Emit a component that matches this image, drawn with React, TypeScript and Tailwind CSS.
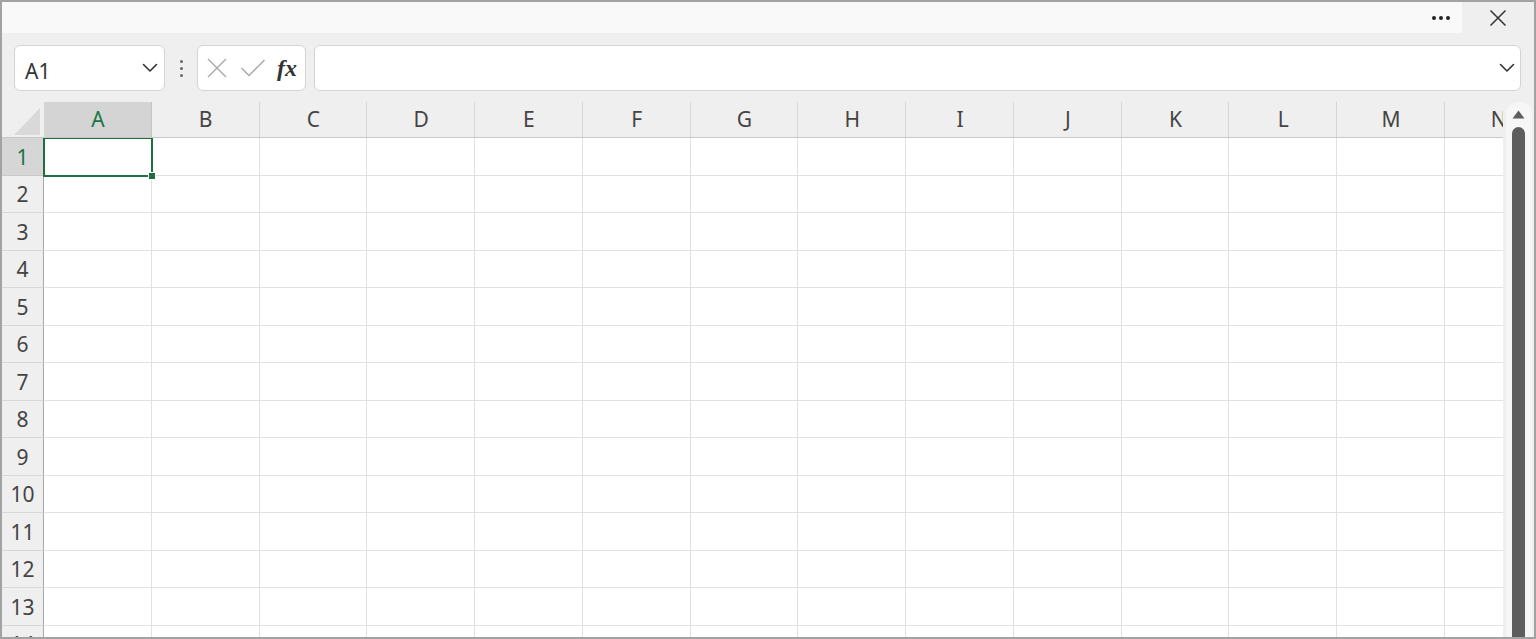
import React from "react";

const COLS = ["A", "B", "C", "D", "E", "F", "G", "H", "I", "J", "K", "L", "M", "N"];
const ROWS = Array.from({ length: 14 }, (_, i) => i + 1);

function Chevron({ className }: { className?: string }) {
  return (
    <svg className={className} width="16" height="10" viewBox="0 0 16 10" fill="none">
      <path d="M1.5 1.5 L8 8 L14.5 1.5" stroke="#333" strokeWidth="1.6" strokeLinecap="round" strokeLinejoin="round" />
    </svg>
  );
}

export default function App() {
  return (
    <div
      className="w-[1536px] h-[639px] overflow-hidden bg-[#efefef] border-2 border-[#a2a2a2] flex flex-col text-[#444]"
      style={{ fontFamily: '"Noto Sans", "Open Sans", sans-serif' }}
    >
      {/* Title strip */}
      <div className="h-[31px] flex shrink-0">
        <div className="flex-1 bg-[#f9f9f9] flex items-center justify-end pr-[12px]">
          <div className="flex gap-[3px] items-center">
            <span className="w-[4px] h-[4px] rounded-full bg-[#222]" />
            <span className="w-[4px] h-[4px] rounded-full bg-[#222]" />
            <span className="w-[4px] h-[4px] rounded-full bg-[#222]" />
          </div>
        </div>
        <div className="w-[72px] flex items-center justify-center">
          <svg width="18" height="18" viewBox="0 0 18 18">
            <path d="M1.5 1.5 L16.5 16.5 M16.5 1.5 L1.5 16.5" stroke="#333" strokeWidth="1.5" />
          </svg>
        </div>
      </div>

      {/* Toolbar */}
      <div className="h-[69px] shrink-0 flex items-start pt-[12px] pl-[12px] pr-[13px]">
        <div className="w-[151px] h-[46px] bg-white rounded-[6px] border border-[#d4d4d4] flex items-center justify-between pl-[10px] pr-[6px]">
          <span className="text-[21px] text-[#333] leading-none mt-[6px]">A1</span>
          <Chevron />
        </div>
        <div className="w-[32px] h-[46px] flex flex-col items-center justify-center gap-[4px]">
          <span className="w-[3px] h-[3px] rounded-full bg-[#666]" />
          <span className="w-[3px] h-[3px] rounded-full bg-[#666]" />
          <span className="w-[3px] h-[3px] rounded-full bg-[#666]" />
        </div>
        <div className="w-[109px] h-[46px] bg-white rounded-[6px] border border-[#d4d4d4] flex items-center pl-[8px]">
          <svg width="22" height="22" viewBox="0 0 22 22">
            <path d="M2 2 L20 20 M20 2 L2 20" stroke="#a9a9a9" strokeWidth="1.4" />
          </svg>
          <svg className="ml-[12px]" width="26" height="20" viewBox="0 0 26 20">
            <path d="M1.5 10 L9 17.5 L24.5 2" stroke="#a9a9a9" strokeWidth="1.4" fill="none" />
          </svg>
          <span
            className="ml-[11px] text-[24px] font-bold italic text-[#333] leading-none"
            style={{ fontFamily: '"Liberation Serif", "DejaVu Serif", serif' }}
          >
            fx
          </span>
        </div>
        <div className="flex-1 ml-[8px] h-[46px] bg-white rounded-[6px] border border-[#d4d4d4] flex items-center justify-end pr-[5px]">
          <Chevron />
        </div>
      </div>

      {/* Grid area */}
      <div className="flex-1 flex min-h-0 relative">
        <div className="w-[1501px] shrink-0 flex flex-col overflow-hidden">
          {/* header row */}
          <div className="h-[36px] shrink-0 flex border-b border-[#c8c8c8]">
            <div className="w-[42px] shrink-0 relative">
              <svg className="absolute left-[12px] top-[6px]" width="27" height="28" viewBox="0 0 27 28">
                <path d="M26 0 L26 27 L0 27 Z" fill="#d9d9d9" />
              </svg>
            </div>
            {COLS.map((c, i) => (
              <div
                key={c}
                className={
                  i === 0
                    ? "w-[107.77px] shrink-0 flex items-center justify-center text-[21px] bg-[#d4d4d4] text-[#217346] border-r border-[#c6c6c6]"
                    : "w-[107.77px] shrink-0 flex items-center justify-center text-[21px] border-r border-[#d6d6d6]"
                }
              >
                <span className="mt-[1px] ml-[1px]">{c}</span>
              </div>
            ))}
          </div>
          {/* body */}
          <div className="flex-1 min-h-0 overflow-hidden relative">
            {ROWS.map((r) => (
              <div key={r} className="h-[37.5px] flex shrink-0">
                <div
                  className={
                    r === 1
                      ? "w-[42px] shrink-0 flex items-center justify-center text-[21px] bg-[#d6d6d6] text-[#217346] border-r border-[#a8a8a8] border-b border-b-[#c8c8c8]"
                      : "w-[42px] shrink-0 flex items-center justify-center text-[21px] bg-[#efefef] border-r border-[#a8a8a8] border-b border-b-[#d8d8d8]"
                  }
                >
                  <span className="mt-[2px]">{r}</span>
                </div>
                <div className="flex-1 flex bg-white border-r border-[#b8b8b8]">
                  {COLS.map((c) => (
                    <div key={c} className="w-[107.77px] shrink-0 border-r border-b border-[#e1e1e1]" />
                  ))}
                </div>
              </div>
            ))}
            {/* selection */}
            <div className="absolute left-[41px] top-[-1px] w-[110px] h-[40px] border-2 border-[#1e6e3e]" />
            <div className="absolute left-[146px] top-[34px] w-[8px] h-[8px] bg-[#1e6e3e] border border-white" />
          </div>
        </div>
        {/* scrollbar */}
        <div className="flex-1 flex justify-center">
          <div className="w-[26px] h-full bg-[#f6f6f6] rounded-t-[12px] flex flex-col items-center pt-[8px]">
            <svg width="13" height="9" viewBox="0 0 13 9">
              <path d="M6.5 0.5 L12.5 8.5 L0.5 8.5 Z" fill="#5d5d5d" />
            </svg>
            <div className="mt-[8px] w-[13px] flex-1 bg-[#5d5d5d] rounded-t-full" />
          </div>
        </div>
      </div>
    </div>
  );
}
